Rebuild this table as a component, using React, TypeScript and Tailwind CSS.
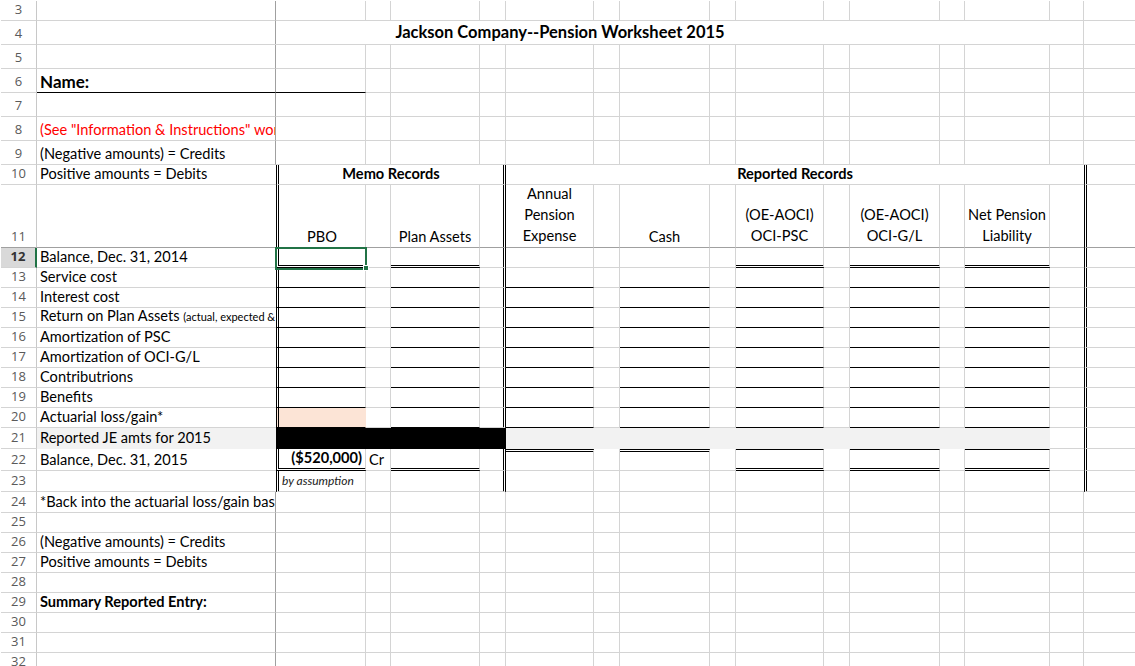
import React from 'react';

const GRID =
  'grid grid-cols-[36px_239px_90px_25px_89px_26px_88px_26px_90px_26px_88px_26px_90px_25px_85px_34px_52px]';

const ROW_H: Record<number, string> = {
  4: 'h-[24px]',
  5: 'h-[24px]',
  6: 'h-[24px]',
  7: 'h-[24px]',
  8: 'h-[24px]',
  9: 'h-[24px]',
  11: 'h-[63px]',
  21: 'h-[21px]',
  22: 'h-[22px]',
  23: 'h-[21px]',
  24: 'h-[21px]',
};

const ROWS = Array.from({ length: 30 }, (_, i) => i + 3);

// merged ranges: row -> start col -> span
const MERGES: Record<number, Record<number, number>> = {
  4: { 1: 15 },
  10: { 2: 4, 6: 10 },
};
const SPAN: Record<number, string> = { 4: 'col-span-4', 10: 'col-span-10', 15: 'col-span-15' };

const R = {
  grid: 'border-r border-r-[#d4d4d4]',
  frozen: 'border-r border-r-[#a0a0a0]',
  none: 'border-r-0',
  dbl: 'border-r-[3px] border-r-black',
  gray: 'border-r border-r-[#f2f2f2]',
  black: 'border-r border-r-black',
  peach: 'border-r border-r-[#fce4d6]',
};
const B = {
  grid: 'border-b border-b-[#d4d4d4]',
  frozen: 'border-b border-b-[#a0a0a0]',
  line: 'border-b border-b-black',
  dbl: 'border-b-[3px] border-b-black',
  gray: 'border-b border-b-[#f2f2f2]',
};
const BG = { gray: 'bg-[#f2f2f2]', black: 'bg-black', peach: 'bg-[#fce4d6]' };

const OPENING = [2, 4, 10, 12, 14];
const framed = (r: number) => r >= 10 && r <= 23;

function fill(r: number, c: number): '' | 'gray' | 'black' | 'peach' {
  if (r === 21 && c === 1) return 'gray';
  if (r === 21 && c >= 2 && c <= 5) return 'black';
  if (r === 21 && c >= 6 && c <= 14) return 'gray';
  if (r === 20 && c === 2) return 'peach';
  return '';
}

function rightOf(r: number, c: number) {
  if (c === 1) return framed(r) ? R.none : R.frozen;
  if (framed(r) && c === 5) return R.dbl;
  if (framed(r) && c === 15) return R.none;
  const f = fill(r, c);
  return f ? R[f] : R.grid;
}

function bottomOf(r: number, c: number) {
  if (r === 11) return B.frozen;
  if (r === 6 && (c === 1 || c === 2)) return B.line;
  if (r === 12) return OPENING.includes(c) ? B.dbl : B.grid;
  if (r >= 13 && r <= 20 && c % 2 === 0 && c >= 2 && c <= 14) return B.line;
  if (r === 21) {
    if (c >= 2 && c <= 5) return B.line;
    if (fill(r, c) === 'gray') return B.gray;
  }
  if (r === 22 && OPENING.includes(c)) return B.dbl;
  return B.grid;
}

// totals line drawn on top of row 22 (just under the JE amounts)
function topOf(r: number, c: number) {
  if (r !== 22) return '';
  if (c === 6 || c === 8) return 'border-t-[3px] border-t-black';
  if (c === 10 || c === 12 || c === 14) return 'border-t border-t-black';
  return '';
}

const LABELS: Record<number, React.ReactNode> = {
  9: '(Negative amounts) = Credits',
  10: 'Positive amounts = Debits',
  12: 'Balance, Dec. 31, 2014',
  13: 'Service cost',
  14: 'Interest cost',
  15: (
    <span>
      Return on Plan Assets <span className="text-[11px]">(actual, expected &amp;</span>
    </span>
  ),
  16: 'Amortization of PSC',
  17: 'Amortization of OCI-G/L',
  18: 'Contributrions',
  19: 'Benefits',
  20: 'Actuarial loss/gain*',
  21: 'Reported JE amts for 2015',
  22: 'Balance, Dec. 31, 2015',
  24: '*Back into the actuarial loss/gain basis',
  26: '(Negative amounts) = Credits',
  27: 'Positive amounts = Debits',
};

const Stack = ({ lines }: { lines: string[] }) => (
  <div className="flex flex-col items-center leading-[21px]">
    {lines.map((l) => (
      <span key={l}>{l}</span>
    ))}
  </div>
);

const HEADS: Record<number, React.ReactNode> = {
  2: 'PBO',
  4: 'Plan Assets',
  6: <Stack lines={['Annual', 'Pension', 'Expense']} />,
  8: 'Cash',
  10: <Stack lines={['(OE-AOCI)', 'OCI-PSC']} />,
  12: <Stack lines={['(OE-AOCI)', 'OCI-G/L']} />,
  14: <Stack lines={['Net Pension', 'Liability']} />,
};

function content(r: number, c: number): [React.ReactNode, string] {
  if (r === 4 && c === 1)
    return [
      <>
        <span className="text-[16.5px] font-bold leading-[22px]">Jackson Company--Pension Worksheet 2015</span>
        <span className="absolute left-[238px] top-0 -bottom-px w-px bg-[#a0a0a0]" />
      </>,
      'relative justify-center',
    ];
  if (r === 6 && c === 1) return [<span className="text-[17px] font-bold">Name:</span>, ''];
  if (r === 8 && c === 1)
    return [<span className="text-[#ff0000]">(See "Information &amp; Instructions" worksheet)</span>, ''];
  if (r === 29 && c === 1) return [<span className="font-bold">Summary Reported Entry:</span>, ''];
  if (c === 1 && LABELS[r]) return [LABELS[r], ''];
  if (r === 10 && c === 2) return [<span className="font-bold">Memo Records</span>, 'justify-center'];
  if (r === 10 && c === 6) return [<span className="font-bold">Reported Records</span>, 'justify-center'];
  if (r === 11 && HEADS[c]) return [HEADS[c], 'justify-center pb-[2px]'];
  if (r === 12 && c === 2)
    return [
      <>
        <span className="absolute -left-[4px] -top-px -right-[2px] -bottom-[5px] border-2 border-[#217346]" />
        <span className="absolute left-[84px] top-[17px] w-[6px] h-[6px] bg-[#217346] border border-white" />
      </>,
      'relative overflow-visible',
    ];
  if (r === 22 && c === 2) return [<span className="font-bold">($520,000)</span>, 'justify-end'];
  if (r === 22 && c === 3) return ['Cr', ''];
  if (r === 23 && c === 2)
    return [<span className="italic text-[12px] text-[#222]">by assumption</span>, 'pb-[2px]'];
  return [null, ''];
}

function Row({ r }: { r: number }) {
  const merges = MERGES[r] || {};
  const cells: React.ReactNode[] = [];
  let c = 1;
  while (c <= 16) {
    const span = merges[c] || 1;
    const last = c + span - 1;
    const f = fill(r, c);
    const right = rightOf(r, last);
    const bottom = bottomOf(r, c);
    const top = topOf(r, c);
    const left = (c === 2 || c === 16) && framed(r) ? 'border-l-[3px] border-l-black' : '';
    const dbl = (right + bottom + left + top).includes('3px') ? 'border-double' : '';
    const [node, extra] = content(r, c);
    cells.push(
      <div
        key={c}
        className={`flex items-end overflow-hidden whitespace-nowrap px-[3px] pb-px ${span > 1 ? SPAN[span] : ''} ${
          f ? BG[f] : ''
        } ${right} ${bottom} ${left} ${top} ${dbl} ${extra}`}
      >
        {node}
      </div>,
    );
    c = last + 1;
  }

  const selected = r === 12;
  return (
    <div className={`${GRID} ${ROW_H[r] || 'h-[20px]'}`}>
      <div
        className={`flex items-end justify-center pb-[2px] font-['Open_Sans',sans-serif] text-[13px] leading-[17px] ${
          selected
            ? 'bg-[#d9d9d9] font-bold text-[#333] border-r-2 border-r-[#217346]'
            : 'text-[#5a5a5a] border-r border-r-[#c8c8c8]'
        } ${r === 11 ? B.frozen : B.grid}`}
      >
        {r}
      </div>
      {cells}
    </div>
  );
}

export default function App() {
  return (
    <div className="w-[1135px] h-[666px] overflow-hidden bg-white pt-px pl-px text-black text-[14.6px] leading-[18px] font-['Lato',sans-serif]">
      {ROWS.map((r) => (
        <Row key={r} r={r} />
      ))}
    </div>
  );
}
